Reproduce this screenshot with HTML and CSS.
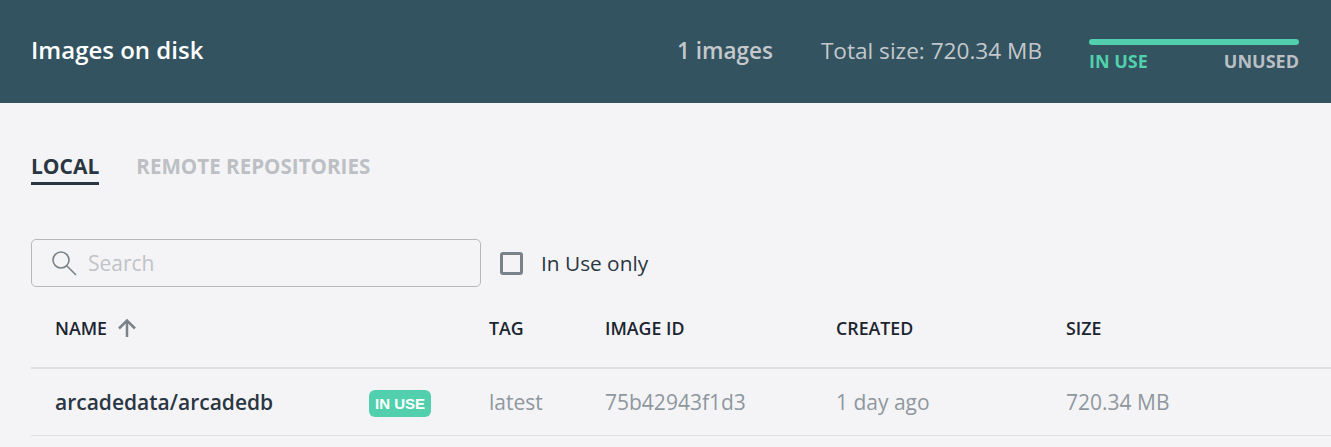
FILE: index.html
```html
<!DOCTYPE html>
<html lang="en">
<head>
<meta charset="utf-8">
<title>Images on disk</title>
<link rel="stylesheet" href="styles.css">
</head>
<body>
<header class="top">
  <h1 class="title">Images on disk</h1>
  <div class="stats">
    <span class="count">1 images</span>
    <span class="total">Total size: 720.34 MB</span>
    <div class="usage">
      <div class="bar"></div>
      <div class="legend"><span class="used">IN USE</span><span class="unused">UNUSED</span></div>
    </div>
  </div>
</header>
<main class="content">
  <nav class="tabs">
    <span class="tab active">LOCAL</span>
    <span class="tab">REMOTE REPOSITORIES</span>
  </nav>
  <div class="filters">
    <div class="search">
      <svg class="search-icon" width="26" height="26" viewBox="0 0 26 26" fill="none" stroke="#7a8289" stroke-width="1.6"><circle cx="9" cy="10" r="8"/><path d="M14.7 15.7l9.3 9.3"/></svg>
      <span class="placeholder">Search</span>
    </div>
    <label class="check"><span class="box"></span><span>In Use only</span></label>
  </div>
  <div class="table">
    <div class="row head">
      <div class="cell name-head">NAME
        <svg width="20" height="20" viewBox="0 0 20 20" fill="none" stroke="#7a8289" stroke-width="2.5"><path d="M10 19V3M2 10.5L10 2.5l8 8"/></svg>
      </div>
      <div class="cell">TAG</div>
      <div class="cell">IMAGE ID</div>
      <div class="cell">CREATED</div>
      <div class="cell">SIZE</div>
    </div>
    <div class="row body">
      <div class="cell name"><span class="repo">arcadedata/arcadedb</span><span class="badge">IN USE</span></div>
      <div class="cell">latest</div>
      <div class="cell">75b42943f1d3</div>
      <div class="cell">1 day ago</div>
      <div class="cell">720.34 MB</div>
    </div>
  </div>
</main>
</body>
</html>
```
FILE: styles.css
```css
* { box-sizing: border-box; }
html, body { margin: 0; height: 100%; overflow: hidden; }
body { background: #f4f4f6; font-family: "Open Sans", sans-serif; color: #2a3642; }
.top { height: 103px; background: #32535f; display: flex; align-items: center; justify-content: space-between; padding: 0 32px 0 31px; }
.title { margin: -3px 0 0; font-size: 24px; font-weight: 600; color: #fff; line-height: 30px; }
.stats { display: flex; align-items: center; }
.count { font-size: 22.5px; font-weight: 600; color: #c4c8cc; margin-right: 48px; line-height: 30px; margin-top: -2px; }
.total { font-size: 22.6px; color: #c4c8cc; margin-right: 47px; line-height: 30px; margin-top: -2px; }
.usage { width: 210px; padding-top: 8px; }
.bar { height: 6px; border-radius: 3px; background: #52d0ad; }
.legend { display: flex; justify-content: space-between; font-size: 18px; font-weight: 700; line-height: 24px; margin-top: 4px; }
.used { color: #52d0ad; }
.unused { color: #b9bfc4; }
.content { padding: 0 0 0 31px; }
.tabs { display: flex; gap: 37px; padding-top: 50px; height: 132px; }
.tab { font-size: 20.6px; font-weight: 700; color: #bcbfc3; line-height: 26px; height: 32px; }
.tab.active { font-size: 21px; color: #2a3642; border-bottom: 3px solid #2a3642; }
.filters { display: flex; align-items: center; height: 48px; margin-top: 4px; }
.search { width: 450px; height: 48px; border: 1px solid #b5b8bc; border-radius: 5px; display: flex; align-items: center; padding-left: 20px; }
.search-icon { margin-right: 10px; }
.placeholder { font-size: 21px; color: #c0c3c7; }
.check { display: flex; align-items: center; margin-left: 19px; font-size: 20.8px; color: #2a3642; }
.box { width: 23px; height: 23px; border: 3px solid #7a8289; border-radius: 3px; margin-right: 18px; }
.row { display: grid; grid-template-columns: 434px 116px 231px 230px 1fr; padding-left: 24px; align-items: center; }
.head { height: 82px; padding-top: 2px; border-bottom: 2px solid #e0e0e3; font-size: 17.8px; font-weight: 600; color: #1b2530; }
.body { height: 67px; border-bottom: 1px solid #e0e0e3; font-size: 21px; color: #8f979e; }
.name-head { display: flex; align-items: center; gap: 10px; }
.name { display: flex; align-items: center; }
.repo { width: 314px; font-weight: 600; color: #2a3642; }
.badge { width: 62px; height: 27px; margin-top: 3px; border-radius: 6px; background: #52d0ad; color: #fff; font-family: "Liberation Sans", sans-serif; font-size: 15px; font-weight: 700; display: flex; align-items: center; justify-content: center; }
```
